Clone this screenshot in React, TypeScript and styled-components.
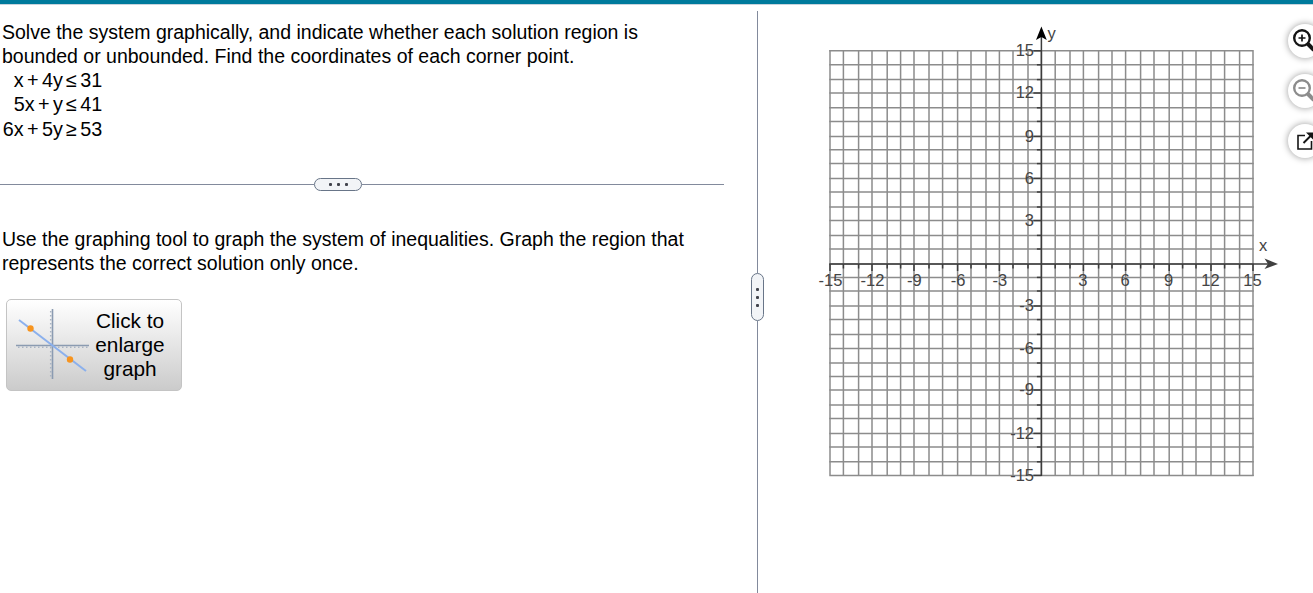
import React from 'react';
import styled, { createGlobalStyle } from 'styled-components';

const GlobalStyle = createGlobalStyle`
  * {
    box-sizing: border-box;
  }

  body {
    margin: 0;
    background: #fff;
    color: #000;
    font-family: 'Liberation Sans', Arial, sans-serif;
    overflow: hidden;
  }
`;

const Page = styled.div`
  display: flex;
  flex-direction: column;
  width: 1313px;
  height: 593px;
  overflow: hidden;
`;

const TopBar = styled.div`
  flex: none;
  height: 5px;
  background: #007a9c;
  border-bottom: 1px solid #c9d3dc;
`;

const Content = styled.main`
  display: flex;
  flex: 1;
  min-height: 0;
`;

const Question = styled.section`
  flex: none;
  width: 724px;
  padding-top: 15px;
  font-size: 19.5px;
  line-height: 24px;
`;

const Line = styled.div`
  margin-left: 2px;
  white-space: nowrap;
`;

const Equations = styled.div`
  display: grid;
  grid-template-columns: 61px auto;
  grid-template-rows: 24px 25px 24px;
  margin-left: 2px;
  width: 110px;
  font-size: 19.8px;
`;

const Left = styled.span`
  display: flex;
  justify-content: flex-end;
  word-spacing: -2px;
  white-space: pre;
`;

const Right = styled.span`
  padding-left: 3px;
  word-spacing: -2px;
  white-space: nowrap;
`;

const Divider = styled.div`
  display: flex;
  align-items: center;
  height: 14px;
  margin: 36px 0 36px;
`;

const Rule = styled.div<{ width?: number }>`
  height: 1px;
  background: #828a9c;
  ${props => (props.width ? `width: ${props.width}px;` : 'flex: 1;')}
`;

const Handle = styled.div<{ vertical?: boolean }>`
  display: flex;
  flex: none;
  flex-direction: ${props => (props.vertical ? 'column' : 'row')};
  align-items: center;
  justify-content: center;
  gap: 5px;
  width: ${props => (props.vertical ? 13 : 48)}px;
  height: ${props => (props.vertical ? 48 : 13)}px;
  border: 1px solid #687588;
  border-radius: 7px;
  background: #f2f4f7;
`;

const Dot = styled.i`
  width: 3px;
  height: 3px;
  border-radius: 1px;
  background: #41434c;
`;

const GraphButton = styled.button`
  display: flex;
  align-items: center;
  width: 176px;
  height: 92px;
  margin: 24px 0 0 6px;
  padding: 0;
  border: 1px solid #c4c4c4;
  border-radius: 5px;
  background: linear-gradient(#fff, #cbcbcb);
  color: #000;
  font: 20.8px/24.3px 'Liberation Sans', Arial, sans-serif;
`;

const ButtonLabel = styled.span`
  width: 78px;
  margin-left: 2px;
  text-align: center;
`;

const Splitter = styled.div`
  display: flex;
  flex: none;
  flex-direction: column;
  align-items: center;
  width: 13px;
  margin: 6px 0 0 27px;
`;

const SplitterLine = styled.div<{ height?: number }>`
  width: 1px;
  background: #828a9c;
  ${props => (props.height ? `height: ${props.height}px;` : 'flex: 1;')}
`;

const GraphPanel = styled.section`
  display: flex;
  flex: none;
  margin-left: 46px;
`;

const Plane = styled.svg`
  flex: none;
`;

const Tools = styled.div`
  display: flex;
  flex-direction: column;
  flex: none;
  gap: 16px;
  margin-left: 8px;
  padding-top: 19px;
`;

const ToolButton = styled.button<{ disabled?: boolean }>`
  display: flex;
  align-items: center;
  justify-content: center;
  width: 34px;
  height: 34px;
  padding: 0;
  border: 0;
  border-radius: 50%;
  background: #fff;
  color: ${props => (props.disabled ? '#8c8c8c' : '#151515')};
  box-shadow: 0 0 7px rgba(0, 0, 0, 0.4);
`;

// Grid line centres, from -15 to 15 on x and from 15 to -15 on y
const COLUMNS = [
  830, 843.4, 858.6, 872, 887.2, 900.6, 914, 929, 942.6, 957.6, 971, 986, 999.4, 1013, 1028, 1041.4,
  1055.2, 1070, 1083.4, 1098.6, 1112, 1125.6, 1140.6, 1154, 1169.2, 1182.6, 1196, 1211, 1224.6, 1239.6, 1253,
];
const ROWS = [
  50.8, 64.8, 79.6, 93, 107.8, 121.4, 136.4, 149.8, 163.6, 178.4, 192, 207, 220.6, 235.4, 249, 264,
  277.4, 291, 306, 319.6, 334.4, 348.4, 363, 376.6, 390, 405, 418.6, 433.4, 447, 461.8, 475.4,
];

const ticks = Array.from({ length: 31 }, (_, i) => i - 15);
const gridX = (n: number) => COLUMNS[n + 15];
const gridY = (n: number) => ROWS[15 - n];

const CoordinatePlane: React.FC = () => (
  <Plane width="470" height="490" viewBox="810 5 470 490">
    <g stroke="#8c8c8c" strokeWidth="1.5">
      {ticks.map(n => (
        <path key={n} d={`M${gridX(n)} 50V476M829.3 ${gridY(n)}H1253.7`} />
      ))}
    </g>
    <g stroke="#3c3c3c" strokeWidth="1.5">
      <path d="M829.3 264H1268M1041.4 476V36" />
      {ticks
        .filter(n => n !== 0)
        .map(n => (
          <React.Fragment key={n}>
            <path d={`M${gridX(n)} 264v${n % 3 === 0 ? 7 : 4.5}`} />
            <path d={`M1041.4 ${gridY(n)}h${n % 3 === 0 ? -8 : -4.5}`} />
          </React.Fragment>
        ))}
    </g>
    <path d="M1278 264 1264.5 258.5 1268 264 1264.5 269Z" fill="#404040" />
    <path d="M1041.4 26.5 1036 40 1041.4 37 1046.8 40Z" fill="#000" />
    <g fill="#444" fontSize="16.5" fontFamily="Liberation Sans, Arial, sans-serif">
      {ticks
        .filter(n => n % 3 === 0 && n !== 0)
        .map(n => (
          <React.Fragment key={n}>
            <text x={gridX(n) + (n > 0 ? -0.6 : 0.4)} y="286" textAnchor="middle">{n}</text>
            <text x="1034" y={gridY(n) + 5.4} textAnchor="end">{n}</text>
          </React.Fragment>
        ))}
      <text x="1259" y="251">x</text>
      <text x="1047.5" y="38.5">y</text>
    </g>
  </Plane>
);

const GraphIcon: React.FC = () => (
  <svg width="82" height="90" viewBox="7 300 82 90" fill="none">
    <path d="M16 345.5H89M52.5 309V379" stroke="#8b9bb1" strokeWidth="1.6" />
    <path d="M18 347.3H88" stroke="#a9b4c3" strokeWidth="1.5" strokeDasharray="1.5 2.5" />
    <path d="M50.7 311V378" stroke="#a9b4c3" strokeWidth="1.5" strokeDasharray="1.5 2.5" />
    <path d="M19 320 86 371" stroke="#8bb0ed" strokeWidth="2" />
    <circle cx="30.5" cy="328.5" r="3.2" fill="#f7941e" />
    <circle cx="70" cy="359.5" r="3.2" fill="#f7941e" />
  </svg>
);

const ZoomIcon: React.FC<{ plus?: boolean }> = ({ plus }) => (
  <svg width="34" height="34" viewBox="0 0 34 34" fill="none" stroke="currentColor">
    <circle cx="14" cy="14" r="7.8" strokeWidth="2.4" />
    <path d="M19.5 19.5 26 26" strokeWidth="4" />
    <path d={plus ? 'M10.5 14h7M14 10.5v7' : 'M10.5 14h7'} strokeWidth="1.7" />
  </svg>
);

const PopOutIcon: React.FC = () => (
  <svg width="34" height="34" viewBox="0 0 34 34" fill="none" stroke="currentColor" strokeWidth="1.6">
    <path d="M17 11.5H10V25H23.5V17" />
    <path d="M15.5 19 23 11.5" strokeWidth="2" />
    <path d="M18 8.5H26V16.5Z" fill="currentColor" stroke="none" />
  </svg>
);

const Dots = () => (
  <>
    <Dot />
    <Dot />
    <Dot />
  </>
);

const equations = [
  { left: 'x + 4y', right: '≤ 31' },
  { left: '5x + y', right: '≤ 41' },
  { left: '6x + 5y', right: '≥ 53' },
];

const App: React.FC = () => (
  <>
    <GlobalStyle />
    <Page>
      <TopBar />
      <Content>
        <Question>
          <Line>Solve the system graphically, and indicate whether each solution region is</Line>
          <Line>bounded or unbounded. Find the coordinates of each corner point.</Line>
          <Equations>
            {equations.map(eq => (
              <React.Fragment key={eq.left}>
                <Left>{eq.left}</Left>
                <Right>{eq.right}</Right>
              </React.Fragment>
            ))}
          </Equations>
          <Divider>
            <Rule width={314} />
            <Handle><Dots /></Handle>
            <Rule />
          </Divider>
          <Line>Use the graphing tool to graph the system of inequalities. Graph the region that</Line>
          <Line>represents the correct solution only once.</Line>
          <GraphButton>
            <GraphIcon />
            <ButtonLabel>Click to enlarge graph</ButtonLabel>
          </GraphButton>
        </Question>
        <Splitter>
          <SplitterLine height={262} />
          <Handle vertical><Dots /></Handle>
          <SplitterLine />
        </Splitter>
        <GraphPanel>
          <CoordinatePlane />
          <Tools>
            <ToolButton aria-label="Zoom in"><ZoomIcon plus /></ToolButton>
            <ToolButton aria-label="Zoom out" disabled><ZoomIcon /></ToolButton>
            <ToolButton aria-label="Open in new window"><PopOutIcon /></ToolButton>
          </Tools>
        </GraphPanel>
      </Content>
    </Page>
  </>
);

export default App;
